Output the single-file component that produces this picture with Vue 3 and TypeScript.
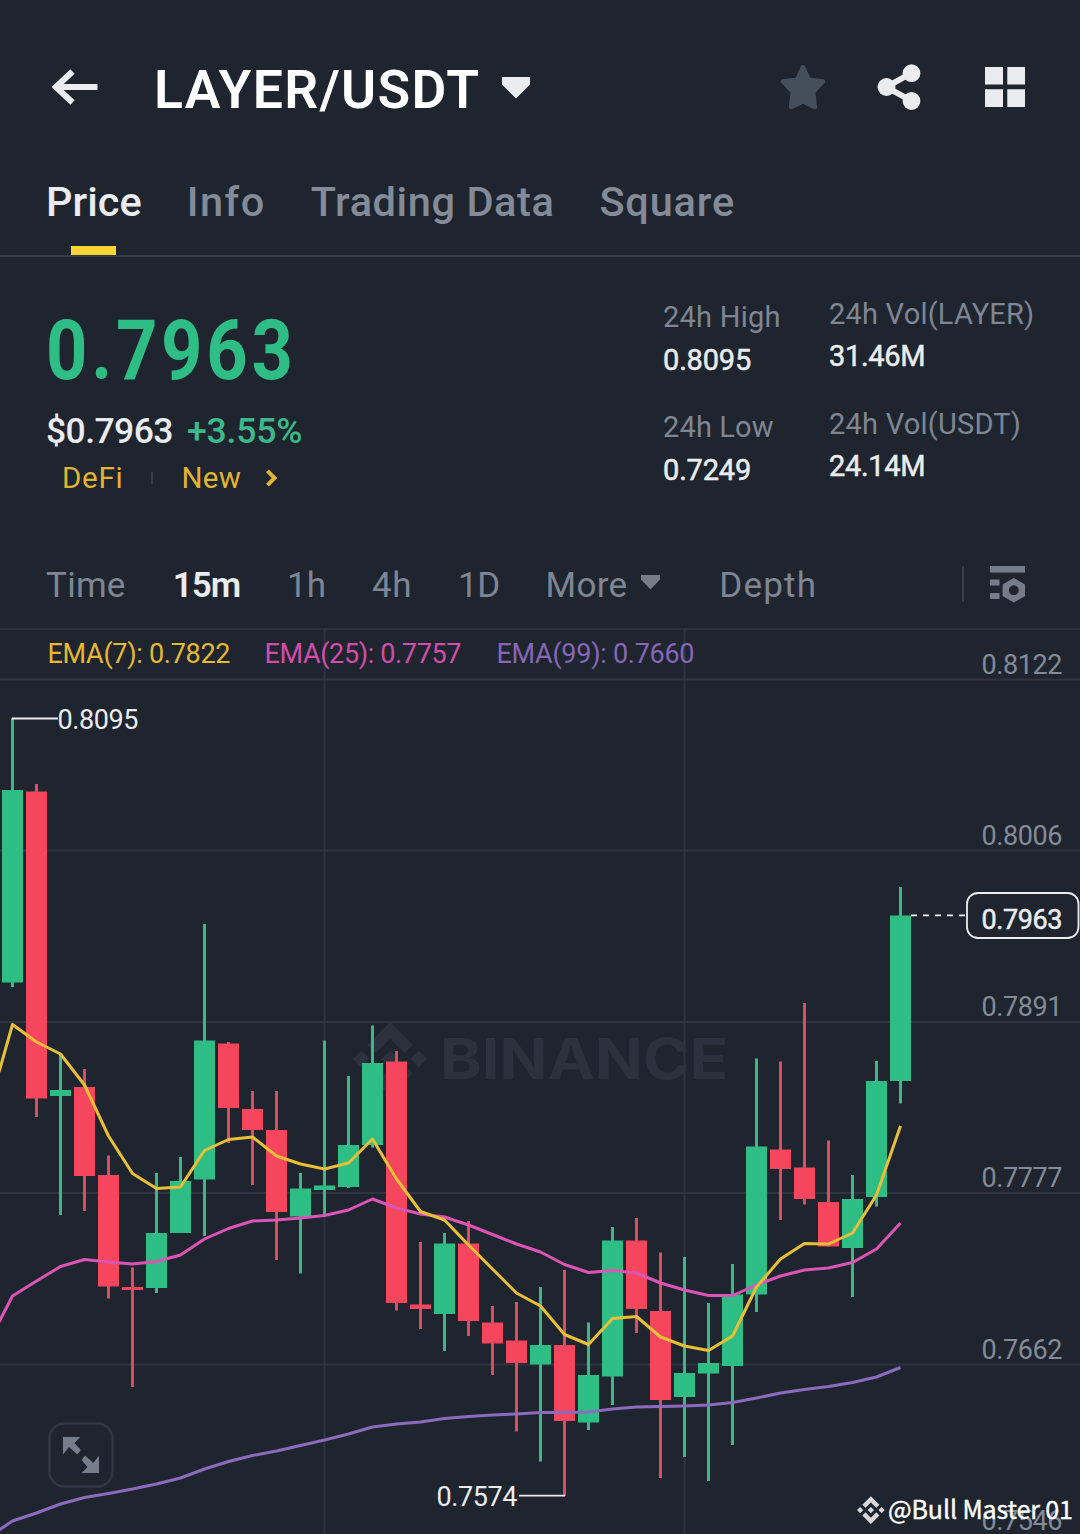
<script setup lang="ts">
interface Candle {
  x: number
  up: boolean
  top: number
  bottom: number
  high: number
  low: number
}

/* Sets the tracking of a label so that it fills the given width. */
const vFit = {
  mounted(el: HTMLElement, binding: { value: number }) {
    const natural = el.offsetWidth
    const count = (el.textContent ?? '').trim().length
    el.style.letterSpacing = `${(binding.value - natural) / count}px`
  },
}

const tabs = [
  { label: 'Price', width: 96, active: true },
  { label: 'Info', width: 79, active: false },
  { label: 'Trading Data', width: 244, active: false },
  { label: 'Square', width: 136, active: false },
]

const stats = [
  [
    { label: '24h High', lw: 118, value: '0.8095', vw: 88 },
    { label: '24h Low', lw: 111, value: '0.7249', vw: 88 },
  ],
  [
    { label: '24h Vol(LAYER)', lw: 205, value: '31.46M', vw: 96 },
    { label: '24h Vol(USDT)', lw: 192, value: '24.14M', vw: 96 },
  ],
]

// [up, body top, body bottom, high, low]
const rows: [number, number, number, number, number][] = [
  [1, 790, 982.5, 718, 987],
  [0, 791.5, 1098.5, 784, 1117],
  [1, 1090, 1096, 1054, 1215],
  [0, 1087, 1176, 1069, 1211],
  [0, 1175, 1286.5, 1155.5, 1298.5],
  [0, 1287, 1290, 1267.5, 1387],
  [1, 1233, 1288, 1173, 1293],
  [1, 1181, 1233, 1157, 1233],
  [1, 1040.5, 1179.5, 924, 1236],
  [0, 1043.5, 1108, 1042, 1143],
  [0, 1109, 1130, 1091, 1185],
  [0, 1130, 1212, 1091, 1260],
  [1, 1188.5, 1216.5, 1173, 1273.5],
  [1, 1185.5, 1190, 1040.5, 1216],
  [1, 1145, 1187, 1076, 1188],
  [1, 1063, 1145, 1025.5, 1147.5],
  [0, 1061.5, 1303, 1051, 1310.5],
  [0, 1304.5, 1309, 1242, 1329],
  [1, 1243.5, 1314, 1233, 1351],
  [0, 1243.5, 1321, 1221, 1336],
  [0, 1322.5, 1343.5, 1306, 1375],
  [0, 1340.5, 1363, 1302, 1431.5],
  [1, 1345, 1364.5, 1287, 1461.5],
  [0, 1345, 1421, 1270, 1496],
  [1, 1375, 1422.5, 1322.5, 1430],
  [1, 1240.5, 1376.5, 1227, 1405],
  [0, 1240.5, 1309, 1218, 1333],
  [0, 1311, 1400, 1252.5, 1478],
  [1, 1373, 1397, 1257, 1457],
  [1, 1363, 1373.5, 1303, 1481],
  [1, 1294.5, 1366, 1264, 1445],
  [1, 1146.5, 1294.5, 1058.5, 1312],
  [0, 1149.5, 1169, 1061.5, 1220],
  [0, 1167.5, 1199, 1003, 1204.5],
  [0, 1202, 1246.5, 1140.5, 1246.5],
  [1, 1199, 1248, 1175, 1297],
  [1, 1081, 1197, 1061, 1206.5],
  [1, 915.5, 1081, 887, 1103.5],
]

const candles: Candle[] = rows.map(([up, top, bottom, high, low], i) => ({
  x: 12.5 + i * 24,
  up: up === 1,
  top,
  bottom,
  high,
  low,
}))

function line(edge: number, ys: number[]): string {
  return [`-1,${edge}`, ...ys.map((y, i) => `${12.5 + i * 24},${y}`)].join(' ')
}

const emas = [
  {
    name: 'EMA(7): 0.7822', color: '#e6b931', stroke: '#e9bf36', x: 47.5, width: 183,
    points: line(1072, [1024.5, 1042, 1054, 1085, 1136, 1173.5, 1188.5, 1187, 1150.5, 1139.5, 1137, 1156, 1164, 1169, 1163, 1139, 1179, 1211.5, 1220, 1245, 1269, 1293, 1306, 1334.5, 1344.5, 1318.5, 1316.5, 1337, 1346, 1350.5, 1336, 1287, 1259, 1243.5, 1244, 1233, 1195, 1126]),
  },
  {
    name: 'EMA(25): 0.7757', color: '#d44caa', stroke: '#dc54b4', x: 264.5, width: 197,
    points: line(1322, [1296, 1281, 1266.5, 1259.5, 1262, 1264, 1261.5, 1255, 1239, 1228.5, 1221, 1220, 1218, 1215.5, 1210, 1199, 1208, 1214, 1217, 1225, 1234.5, 1244, 1252, 1264.5, 1272.5, 1270.5, 1273, 1283, 1290, 1295.5, 1295.5, 1285, 1276, 1270, 1268, 1262.5, 1249, 1223]),
  },
  {
    name: 'EMA(99): 0.7660', color: '#8766b5', stroke: '#8a6bbd', x: 496.5, width: 198,
    points: line(1530, [1521, 1513, 1504, 1497.5, 1493.5, 1489, 1484, 1478, 1469, 1461.5, 1455.5, 1451, 1445.5, 1440, 1434, 1427, 1424, 1422, 1418.5, 1416.5, 1415, 1414, 1412.5, 1412.5, 1412, 1409, 1407, 1406.5, 1406, 1405, 1402.5, 1398, 1393, 1389.5, 1386.5, 1382.5, 1377, 1367.5]),
  },
]

const gridRows = [679.5, 850.5, 1022, 1193, 1364.5]
const axis = [
  { price: '0.8122', y: 674 },
  { price: '0.8006', y: 845 },
  { price: '0.7891', y: 1016 },
  { price: '0.7777', y: 1187 },
  { price: '0.7662', y: 1359 },
  { price: '0.7546', y: 1530 },
]

const logo =
  'M38.73 53.2l24.59-24.58 24.6 24.6 14.3-14.31L63.32 0l-38.9 38.9zM0 63.31L14.3 49l14.31 14.31-14.31 14.3zM38.73 73.41L63.32 98l24.6-24.6 14.31 14.29-38.91 38.92-38.91-38.88zM98 63.31L112.3 49l14.31 14.3-14.31 14.32zM77.83 63.3L63.32 48.78 48.81 63.28l14.51 14.5z'
</script>

<template>
  <main class="screen">
    <header class="top">
      <svg class="back" width="46" height="36" viewBox="0 0 46 36">
        <path d="M20.500 2.500L4 18l16.500 15.500M4 18h41.500" fill="none" stroke="#eaecef" stroke-width="6.200" />
      </svg>
      <h1><span v-fit="326">LAYER/USDT</span></h1>
      <svg class="caret" width="28" height="22" viewBox="0 0 28 22">
        <path d="M0 0h28v7.500L14 21.500 0 7.500z" fill="#eaecef" />
      </svg>
      <svg class="star" width="46" height="46" viewBox="0 0 46 46">
        <path d="M23 3.200l5.700 12.500 14.300 1.700-9.800 10.400 1.600 15.200L23 37.500 11.200 43l1.600-15.200L3 17.400l14.300-1.700z" fill="#454e5b" stroke="#454e5b" stroke-width="4.500" stroke-linejoin="round" />
      </svg>
      <svg class="share" width="44" height="46" viewBox="0 0 44 46">
        <path d="M34.500 9L9.500 23l25 14" fill="none" stroke="#eaecef" stroke-width="6" />
        <g fill="#eaecef">
          <circle cx="9.500" cy="23" r="9" />
          <circle cx="34.500" cy="9.200" r="8.900" />
          <circle cx="34.500" cy="37" r="8.900" />
        </g>
      </svg>
      <svg class="apps" width="40" height="40" viewBox="0 0 40 40">
        <path d="M0 0h18v17.500H0zM22.300 0H40v17.500H22.300zM0 22.300h18V40H0zM22.300 22.300H40V40H22.300z" fill="#eaecef" />
      </svg>
    </header>

    <nav class="tabs">
      <a v-for="tab in tabs" :key="tab.label" :class="{ active: tab.active }">
        <span v-fit="tab.width">{{ tab.label }}</span>
      </a>
    </nav>

    <section class="summary">
      <div class="quote">
        <div class="price"><span v-fit="288">0.7963</span></div>
        <div class="fiat">
          <span v-fit="127">$0.7963</span>
          <span v-fit="115" class="change">+3.55%</span>
        </div>
        <div class="tags">
          <span v-fit="61">DeFi</span>
          <i />
          <span v-fit="60">New</span>
          <svg width="14" height="18" viewBox="0 0 14 18">
            <path d="M2.500 1.800L9.500 9l-7 7.200" fill="none" stroke="#e3b432" stroke-width="4" />
          </svg>
        </div>
      </div>
      <div v-for="(group, g) in stats" :key="g" class="stats">
        <dl v-for="item in group" :key="item.label">
          <dt><span v-fit="item.lw">{{ item.label }}</span></dt>
          <dd><span v-fit="item.vw">{{ item.value }}</span></dd>
        </dl>
      </div>
    </section>

    <nav class="frames">
      <span class="time"><span v-fit="80">Time</span></span>
      <span class="m15"><span v-fit="67">15m</span></span>
      <span class="h1"><span v-fit="39">1h</span></span>
      <span class="h4"><span v-fit="40">4h</span></span>
      <span class="d1"><span v-fit="42">1D</span></span>
      <span class="more"><span v-fit="82">More</span></span>
      <svg class="drop" width="19" height="15" viewBox="0 0 19 15">
        <path d="M0 0h19v4.500L9.500 14.500 0 4.500z" fill="#767d8a" />
      </svg>
      <span class="depth"><span v-fit="98">Depth</span></span>
      <i class="rule" />
      <svg class="settings" width="36" height="37" viewBox="0 0 36 37">
        <g fill="#767d8a">
          <path d="M0 0h35v6.500H0zM0 13.500h9.500v6H0zM0 27h9.500v6H0z" />
          <path fill-rule="evenodd" d="M23.800 12l11.200 6.500v11.500L23.800 36.500 12.600 30V18.500zM23.800 19.300a4.900 4.900 0 1 0 .01 0z" />
        </g>
      </svg>
    </nav>

    <svg class="chart" width="1080" height="904" viewBox="0 630 1080 904">
      <g stroke="#2e3540" stroke-width="2">
        <line v-for="y in gridRows" :key="y" x1="0" x2="1080" :y1="y" :y2="y" />
        <line x1="324.500" x2="324.500" y1="630" y2="1534" />
        <line x1="684.500" x2="684.500" y1="630" y2="1534" />
      </g>

      <g fill="#2b323d">
        <path :d="logo" transform="translate(353 1022) scale(.585)" />
        <text x="440" y="1079" font-size="56.500" font-weight="700" class="brand" textLength="288" lengthAdjust="spacingAndGlyphs">BINANCE</text>
      </g>

      <g v-for="c in candles" :key="c.x">
        <rect :x="c.x - 1.500" :y="c.high" width="3" :height="c.low - c.high" :fill="c.up ? '#3fb589' : '#dd4c62'" />
        <rect :x="c.x - 10.500" :y="c.top" width="21" :height="c.bottom - c.top" :fill="c.up ? '#2ebd85' : '#f6465d'" />
      </g>

      <g fill="none" stroke-width="3" stroke-linejoin="round">
        <polyline v-for="e in [...emas].reverse()" :key="e.name" :points="e.points" :stroke="e.stroke" />
      </g>

      <text v-for="e in emas" :key="e.name" :x="e.x" y="663" :fill="e.color" :textLength="e.width">{{ e.name }}</text>
      <text v-for="a in axis" :key="a.price" x="981.500" :y="a.y" fill="#848b98" textLength="81">{{ a.price }}</text>

      <g stroke="#eaecef" stroke-width="1.800">
        <path d="M12 718.500h46M519 1495.700h46" fill="none" />
        <path d="M911 915.300h56" stroke-dasharray="6 6" fill="none" />
        <rect x="967" y="893" width="111.500" height="45" rx="11" fill="#1e252f" />
      </g>
      <g fill="#eaecef">
        <text x="57.500" y="729" textLength="81">0.8095</text>
        <text x="436.500" y="1506" textLength="81">0.7574</text>
        <text x="981.500" y="929" textLength="81" stroke="#eaecef" stroke-width=".5">0.7963</text>
      </g>

      <rect x="49.500" y="1423.500" width="63" height="63" rx="15" fill="#1e252f" stroke="#303743" stroke-width="2.500" />
      <path d="M63 1437h17.200l-5.700 5.900 6.400 7-3.500 4.700-8.400-7.600-6 7.500zM99 1473H81.500l6-5.900-6-7.100 3.500-4.500 8.400 7.600 5.600-7.600z" fill="#777e8b" />

      <path :d="logo" transform="translate(857 1496.200) scale(.219)" fill="#d6d8db" />
      <text x="888" y="1519" fill="#fff" class="author" textLength="185">@Bull Master 01</text>
    </svg>
  </main>
</template>

<style>
body {
  background: #1e252f;
}
</style>

<style scoped>
.screen {
  width: 1080px;
  height: 1534px;
  overflow: hidden;
  background: #1e252f;
  font-family: Roboto, 'Liberation Sans', sans-serif;
  color: #eaecef;
  white-space: nowrap;
}

svg {
  display: block;
  flex: none;
}

.top {
  display: flex;
  align-items: center;
  height: 176px;
  box-sizing: border-box;
  padding: 0 55px 2px 52px;
}

.top h1 {
  margin: 5px 0 0 56px;
  width: 326px;
  font-size: 53.5px;
  line-height: 60px;
  font-weight: 600;
  color: #fff;
}

.caret {
  margin: 2px 0 0 22px;
}

.star {
  margin-left: 250px;
}

.share {
  margin-left: 51px;
}

.apps {
  margin-left: auto;
}

.tabs {
  display: flex;
  gap: 45px;
  height: 79px;
  padding-left: 46px;
  border-bottom: 2px solid #333a46;
  font-size: 41.5px;
  line-height: 52px;
  font-weight: 500;
  color: #848b98;
}

.tabs a {
  display: flex;
  flex-direction: column;
  justify-content: space-between;
}

.tabs .active {
  color: #eaecef;
}

.tabs .active::after {
  content: '';
  width: 45px;
  height: 9px;
  margin-left: 25px;
  background: #fcd535;
}

.summary {
  display: flex;
  height: 288px;
  padding-left: 46px;
}

.quote {
  width: 617px;
  padding-top: 53px;
}

.price {
  font-size: 83px;
  line-height: 82px;
  font-weight: 700;
  color: #2ebd85;
}

.price span {
  display: inline-block;
  transform: scaleX(0.87);
  transform-origin: left;
}

.fiat {
  display: flex;
  gap: 14px;
  margin-top: 19px;
  font-size: 35.5px;
  line-height: 40px;
  font-weight: 500;
}

.change {
  color: #3db88a;
}

.tags {
  display: flex;
  align-items: center;
  margin-top: 7px;
  padding-left: 16px;
  font-size: 29.5px;
  line-height: 40px;
  color: #e3b432;
}

.tags i {
  width: 2px;
  height: 12px;
  margin: 0 28px 0 28px;
  background: #343b47;
}

.tags svg {
  margin-left: 24px;
}

.stats {
  display: flex;
  flex-direction: column;
  gap: 27px;
  width: 166px;
  padding-top: 40px;
  font-size: 29px;
  line-height: 40px;
}

.stats + .stats {
  gap: 27px;
  padding-top: 37px;
}

.stats dl,
.stats dd {
  margin: 0;
}

.stats dt {
  color: #7f8693;
}

.stats dd {
  margin-top: 3px;
  -webkit-text-stroke: 0.5px currentColor;
}

.stats + .stats dd {
  margin: 2px 0 1px;
}

.frames {
  display: flex;
  align-items: center;
  height: 85px;
  box-sizing: border-box;
  padding: 0 54px 2px 46px;
  border-bottom: 2px solid #2b313c;
  font-size: 35px;
  line-height: 80px;
  color: #7f8693;
}

.m15 {
  margin-left: 47px;
  color: #eaecef;
  font-weight: 600;
}

.h1 {
  margin-left: 47px;
}

.h4 {
  margin-left: 46px;
}

.d1 {
  margin-left: 46px;
}

.more {
  margin-left: 46px;
}

.drop {
  margin: -6px 0 0 14px;
}

.depth {
  margin-left: 59px;
}

.rule {
  width: 2px;
  height: 36px;
  margin: -4px 0 0 auto;
  background: #363d49;
}

.settings {
  margin: -2px 0 0 26px;
}

.chart {
  font-size: 27px;
}

.brand {
  font-family: Inter, 'Liberation Sans', sans-serif;
}

.author {
  font-family: 'Noto Sans CJK SC', sans-serif;
  font-size: 25px;
  font-weight: 400;
  stroke: #fff;
  stroke-width: 0.4px;
}
</style>
